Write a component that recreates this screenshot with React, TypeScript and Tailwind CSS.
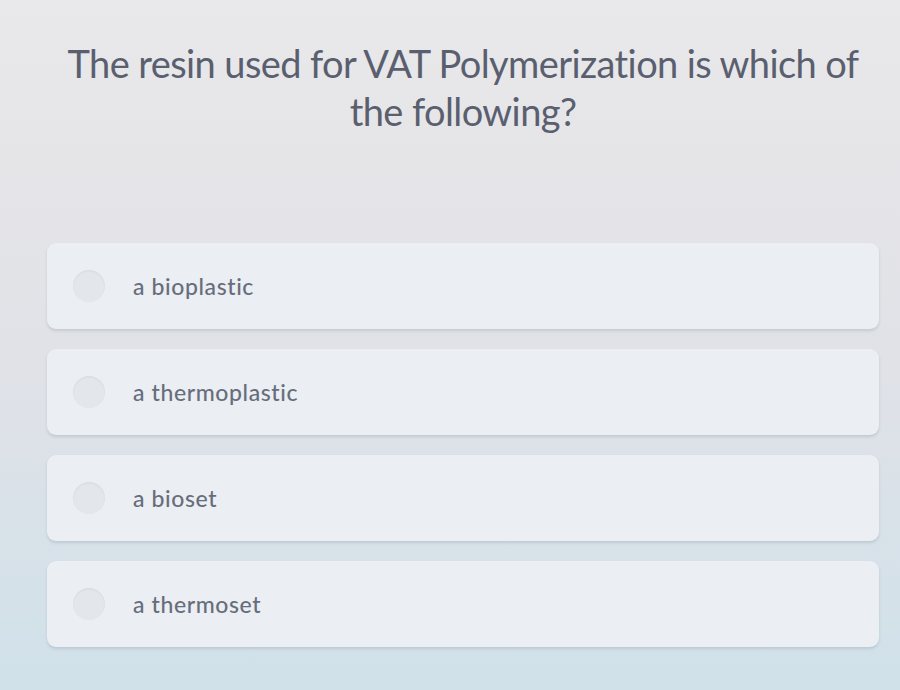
import { useState } from 'react';

const options = ['a bioplastic', 'a thermoplastic', 'a bioset', 'a thermoset'];

export default function App() {
  const [picked, setPicked] = useState<number | null>(null);

  return (
    <div className="w-[900px] h-[690px] overflow-hidden bg-gradient-to-b from-[#e9e8ea] via-[#e1e2e7] to-[#d0e1ea] font-['Lato','Noto_Sans',sans-serif]">
      <div className="h-full pl-[47px] pr-[21px] pt-[39px]">
        <h1 className="text-center text-[38px] leading-[48px] tracking-[-0.6px] text-[#5a5f6f]">
          The resin used for VAT Polymerization is which of
          <br />
          the following?
        </h1>

        <div className="mt-[108px] flex flex-col gap-[20px]">
          {options.map((opt, i) => (
            <button
              key={opt}
              onClick={() => setPicked(i)}
              className="h-[86px] w-full flex items-center gap-[28px] pl-[26px] rounded-[9px] bg-[#ebeef3] shadow-[0_2px_3px_rgba(120,130,150,0.25)] text-left"
            >
              <span
                className={
                  picked === i
                    ? 'w-[32px] h-[32px] rounded-full bg-[#9aa6b8]'
                    : 'w-[32px] h-[32px] rounded-full bg-[#e3e6ea] shadow-[inset_0_1px_2px_rgba(120,130,150,0.12)]'
                }
              />
              <span className="text-[23px] tracking-[0.6px] text-[#676d7b] font-medium">{opt}</span>
            </button>
          ))}
        </div>
      </div>
    </div>
  );
}
